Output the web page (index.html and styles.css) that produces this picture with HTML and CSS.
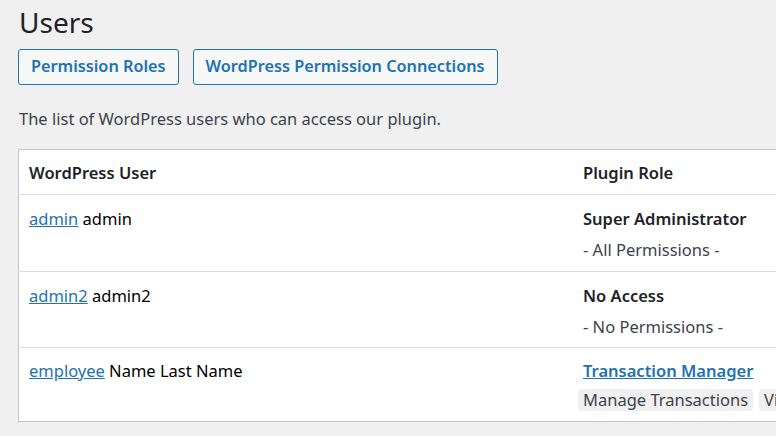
FILE: index.html
```html
<!DOCTYPE html>
<html lang="en">
<head>
  <meta charset="UTF-8">
  <title>Users</title>
  <link rel="stylesheet" href="styles.css">
</head>
<body>
  <div class="wrap">
    <h1 class="page-title">Users</h1>

    <div class="tabs">
      <a class="button" href="#">Permission Roles</a>
      <a class="button" href="#">WordPress Permission Connections</a>
    </div>

    <p class="description">The list of WordPress users who can access our plugin.</p>

    <table class="users-table">
      <thead>
        <tr>
          <th class="col-user">WordPress User</th>
          <th class="col-role">Plugin Role</th>
        </tr>
      </thead>
      <tbody>
        <tr>
          <td><a href="#">admin</a> admin</td>
          <td>
            <div class="role-name">Super Administrator</div>
            <div class="role-perms">- All Permissions -</div>
          </td>
        </tr>
        <tr>
          <td><a href="#">admin2</a> admin2</td>
          <td>
            <div class="role-name">No Access</div>
            <div class="role-perms">- No Permissions -</div>
          </td>
        </tr>
        <tr>
          <td><a href="#">employee</a> Name Last Name</td>
          <td>
            <div class="role-name"><a href="#">Transaction Manager</a></div>
            <div class="role-perms badges">
              <span class="badge">Manage Transactions</span>
              <span class="badge">View Transactions</span>
            </div>
          </td>
        </tr>
      </tbody>
    </table>
  </div>
</body>
</html>
```

FILE: styles.css
```css
body {
  margin: 0;
  background: #f0f0f1;
  color: #3c434a;
  font-family: "Noto Sans", "Open Sans", sans-serif;
  font-size: 16.5px;
  overflow: hidden;
}

.wrap {
  padding: 0 0 0 18px;
  width: 960px;
}

.page-title {
  margin: 0;
  padding: 3px 0 0 1px;
  font-size: 28px;
  font-weight: 400;
  line-height: 38px;
  color: #1d2327;
}

.tabs {
  display: flex;
  gap: 14px;
  margin-top: 8px;
}

.button {
  display: inline-block;
  box-sizing: border-box;
  height: 36px;
  line-height: 33px;
  padding: 0 12px;
  border: 1px solid #2271b1;
  border-radius: 3px;
  background: #f6f7f7;
  color: #2271b1;
  font-size: 16.25px;
  font-weight: 600;
  text-decoration: none;
}

.description {
  margin: 22px 0 0 1px;
  line-height: 24px;
}

a {
  color: #2271b1;
}

.users-table {
  margin-top: 18px;
  width: 100%;
  border-collapse: collapse;
  background: #fff;
  border: 1px solid #c3c4c7;
}

.users-table th {
  text-align: left;
  font-weight: 600;
  color: #1d2327;
  height: 44px;
  padding: 0 10px;
  border-bottom: 1px solid #dcdcde;
}

.col-user {
  width: 534px;
}

.users-table td {
  vertical-align: top;
  color: #000;
  padding: 12px 10px 0;
  height: 64px;
  border-bottom: 1px solid #dcdcde;
}

.users-table tbody tr:nth-child(2) td {
  height: 63px;
}

.users-table tbody tr:last-child td {
  border-bottom: none;
  padding-top: 11px;
  height: 62px;
}

.role-name {
  font-weight: 600;
  color: #1d2327;
  line-height: 24px;
}

.role-name a {
  color: #2271b1;
}

.role-perms {
  margin-top: 9px;
  color: #3c434a;
  line-height: 20px;
}

.badges {
  display: flex;
  gap: 6px;
  margin-top: 6px;
  margin-left: -5px;
}

.badge {
  background: #f0f0f1;
  border-radius: 4px;
  padding: 1px 5px;
  white-space: nowrap;
}
```
